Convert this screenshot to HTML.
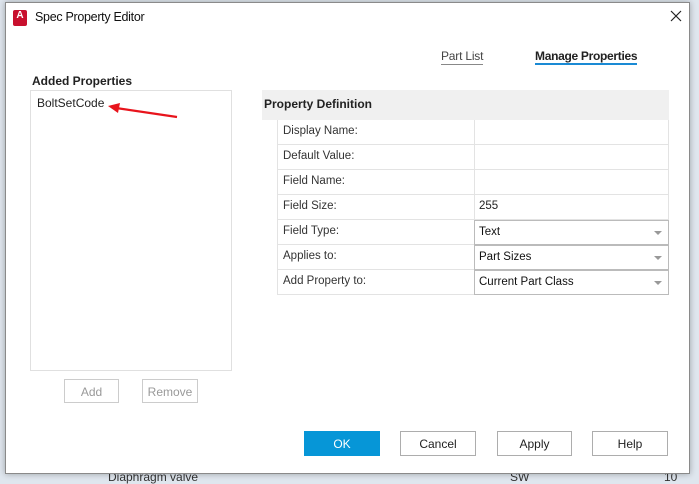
<!DOCTYPE html>
<html><head><style>
body{margin:0;width:699px;height:480px;background:#dfe6ee;position:relative;overflow:hidden;font-family:"Liberation Sans",sans-serif;font-size:11.5px;color:#222}
.a{position:absolute}
.dlg{left:5px;top:2px;width:683px;height:470px;background:#fff;border:1px solid #8a8a8a;box-shadow:0 0 6px rgba(0,0,0,.3)}
.btn{position:absolute;height:24px;border:1px solid #adadad;background:#fff;text-align:center;line-height:24px;font-size:12px;box-sizing:border-box}
.row{position:absolute;left:277px;width:392px;height:25px;border-bottom:1px solid #e3e3e3;box-sizing:border-box}
.row .l{position:absolute;left:6px;top:5px;color:#333}
.row .v{position:absolute;left:197px;top:0;width:195px;height:25px;border-left:1px solid #e3e3e3;box-sizing:border-box;padding:5px 4px}
.dd{border:1px solid #bbb!important;background:#fff;color:#111}
.dd:after{content:"";position:absolute;right:6px;top:10px;border:4px solid transparent;border-top:4px solid #999}
</style></head><body>
<div class="a" style="left:108px;top:470px;font-size:12px;color:#333">Diaphragm valve</div>
<div class="a" style="left:510px;top:470px;font-size:12px;color:#333">SW</div>
<div class="a" style="left:664px;top:470px;font-size:12px;color:#333">10</div>
<div class="a dlg"></div>
<div class="a" style="left:13px;top:10px;width:14px;height:16px;background:#c8102e;border-radius:2px;color:#fff;font-size:10px;font-weight:bold;text-align:center;line-height:12px">A</div>
<div class="a" style="left:35px;top:10px;font-size:12.5px;color:#111;letter-spacing:-0.3px">Spec Property Editor</div>
<svg class="a" style="left:670px;top:10px" width="12" height="12"><path d="M1 1L11 11M11 1L1 11" stroke="#222" stroke-width="1.2"/></svg>
<div class="a" style="left:441px;top:49px;font-size:12px;color:#444;border-bottom:1px solid #888;padding-bottom:1px;letter-spacing:-0.2px">Part List</div>
<div class="a" style="left:535px;top:49px;font-size:12px;font-weight:bold;color:#222;border-bottom:2px solid #1a8ad4;padding-bottom:0;letter-spacing:-0.3px">Manage Properties</div>
<div class="a" style="left:32px;top:74px;font-weight:bold;font-size:12px">Added Properties</div>
<div class="a" style="left:30px;top:90px;width:200px;height:279px;border:1px solid #e0e0e0"></div>
<div class="a" style="left:37px;top:96px;font-size:12px">BoltSetCode</div>
<svg class="a" style="left:104px;top:100px" width="80" height="22"><line x1="73" y1="17" x2="12" y2="8" stroke="#e8141c" stroke-width="2.2"/><polygon points="4,6 16,3 14,13" fill="#e8141c"/></svg>
<div class="btn" style="left:64px;top:379px;width:55px;color:#999;border-color:#ccc">Add</div>
<div class="btn" style="left:142px;top:379px;width:56px;color:#999;border-color:#ccc">Remove</div>
<div class="a" style="left:262px;top:90px;width:407px;height:30px;background:#f0f0f0"></div>
<div class="a" style="left:264px;top:97px;font-weight:bold;font-size:12px">Property Definition</div>
<div class="a" style="left:277px;top:120px;width:392px;height:175px;border-left:1px solid #e3e3e3;border-right:1px solid #e3e3e3;box-sizing:border-box"></div>
<div class="row" style="top:120px"><span class="l">Display Name:</span><div class="v"></div></div>
<div class="row" style="top:145px"><span class="l">Default Value:</span><div class="v"></div></div>
<div class="row" style="top:170px"><span class="l">Field Name:</span><div class="v"></div></div>
<div class="row" style="top:195px"><span class="l">Field Size:</span><div class="v">255</div></div>
<div class="row" style="top:220px"><span class="l">Field Type:</span><div class="v dd">Text</div></div>
<div class="row" style="top:245px"><span class="l">Applies to:</span><div class="v dd">Part Sizes</div></div>
<div class="row" style="top:270px"><span class="l">Add Property to:</span><div class="v dd">Current Part Class</div></div>
<div class="btn" style="left:304px;top:431px;width:76px;height:25px;background:#0696d7;border-color:#0696d7;color:#fff">OK</div>
<div class="btn" style="left:400px;top:431px;width:76px;height:25px">Cancel</div>
<div class="btn" style="left:497px;top:431px;width:75px;height:25px">Apply</div>
<div class="btn" style="left:592px;top:431px;width:76px;height:25px">Help</div>
</body></html>
